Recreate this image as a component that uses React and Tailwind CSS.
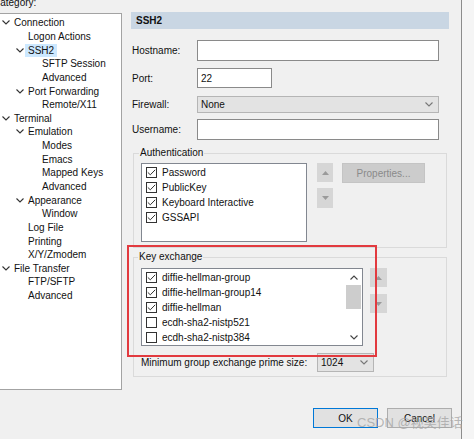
import React from 'react';

const tree = [
  { level: 0, chev: true, label: 'Connection' },
  { level: 1, label: 'Logon Actions' },
  { level: 1, chev: true, label: 'SSH2', selected: true },
  { level: 2, label: 'SFTP Session' },
  { level: 2, label: 'Advanced' },
  { level: 1, chev: true, label: 'Port Forwarding' },
  { level: 2, label: 'Remote/X11' },
  { level: 0, chev: true, label: 'Terminal' },
  { level: 1, chev: true, label: 'Emulation' },
  { level: 2, label: 'Modes' },
  { level: 2, label: 'Emacs' },
  { level: 2, label: 'Mapped Keys' },
  { level: 2, label: 'Advanced' },
  { level: 1, chev: true, label: 'Appearance' },
  { level: 2, label: 'Window' },
  { level: 1, label: 'Log File' },
  { level: 1, label: 'Printing' },
  { level: 1, label: 'X/Y/Zmodem' },
  { level: 0, chev: true, label: 'File Transfer' },
  { level: 1, label: 'FTP/SFTP' },
  { level: 1, label: 'Advanced' },
];

const authMethods = ['Password', 'PublicKey', 'Keyboard Interactive', 'GSSAPI'];

const kexMethods = [
  { label: 'diffie-hellman-group', on: true },
  { label: 'diffie-hellman-group14', on: true },
  { label: 'diffie-hellman', on: true },
  { label: 'ecdh-sha2-nistp521', on: false },
  { label: 'ecdh-sha2-nistp384', on: false },
];

function Chevron({ up = false, color = '#333' }) {
  return (
    <svg width="8" height="5" viewBox="0 0 8 5" className="shrink-0">
      <path
        d={up ? 'M0.5 4.5 L4 1 L7.5 4.5' : 'M0.5 0.5 L4 4 L7.5 0.5'}
        fill="none"
        stroke={color}
        strokeWidth="1.1"
      />
    </svg>
  );
}

function Triangle({ up = false }) {
  return (
    <svg width="7" height="4" viewBox="0 0 7 4">
      <path d={up ? 'M0 4 L3.5 0 L7 4 Z' : 'M0 0 L3.5 4 L7 0 Z'} fill="#9a9a9a" />
    </svg>
  );
}

function Checkbox({ checked }) {
  return (
    <span className="flex h-[11px] w-[11px] shrink-0 items-center justify-center border border-[#333] bg-white">
      {checked && (
        <svg width="9" height="7" viewBox="0 0 9 7">
          <path d="M0.8 3.4 L3.3 5.8 L8.2 0.8" fill="none" stroke="#333" strokeWidth="1" />
        </svg>
      )}
    </span>
  );
}

function CheckRow({ label, checked }) {
  return (
    <div className="flex h-[15px] items-center pl-[4px]">
      <Checkbox checked={checked} />
      <span className="ml-[5px]">{label}</span>
    </div>
  );
}

function SideButton({ up, h = 'h-[19px]', w = 'w-[16px]' }) {
  return (
    <div className={`flex ${h} ${w} items-center justify-center bg-[#d6d6d6]`}>
      <Triangle up={up} />
    </div>
  );
}

function FormRow({ label, children, className }) {
  return (
    <div className={`flex items-center ${className}`}>
      <span className="w-[66px] pl-[1px]">{label}</span>
      {children}
    </div>
  );
}

export default function App() {
  return (
    <div className="relative flex h-[439px] w-[474px] overflow-hidden bg-[#f0f0f0] font-['Liberation_Sans','Noto_Sans_CJK_SC',sans-serif] text-[10px] text-[#111]">
      {/* category tree */}
      <div className="flex w-[122px] shrink-0 flex-col">
        <div className="h-[13px] overflow-hidden">
          <span className="-ml-[7px] -mt-[2px] block leading-[10px]">Category:</span>
        </div>
        <div className="h-[377px] border-t border-r border-b border-[#a3a3a3] bg-white pt-[2px]">
          {tree.map((item, i) => (
            <div
              key={i}
              className={`flex h-[13.65px] items-center ${
                item.level === 0 ? 'pl-0' : item.level === 1 ? 'pl-[14px]' : 'pl-[28px]'
              }`}
            >
              <span className="flex w-[14px] justify-center pr-[3px]">
                {item.chev && <Chevron />}
              </span>
              <span
                className={`leading-[13px] ${
                  item.selected ? '-ml-[3px] bg-[#cce8ff] px-[3px]' : ''
                }`}
              >
                {item.label}
              </span>
            </div>
          ))}
        </div>
      </div>

      {/* settings pane */}
      <div className="flex w-[340px] shrink-0 flex-col border-r border-[#8c8c8c] pt-[12px] pl-[9px]">
        <div className="w-[318px]">
          <div className="flex h-[17px] items-center bg-[#c9d6e3] px-[5px] font-bold">SSH2</div>

          <FormRow label="Hostname:" className="mt-[11px] h-[21px]">
            <div className="h-full w-[242px] border border-[#8a8a8a] bg-white" />
          </FormRow>
          <FormRow label="Port:" className="mt-[7px] h-[20px]">
            <div className="flex h-full w-[75px] items-center border border-[#8a8a8a] bg-white px-[3px]">
              22
            </div>
          </FormRow>
          <FormRow label="Firewall:" className="mt-[8px] h-[17px]">
            <div className="flex h-full w-[242px] items-center justify-between border border-[#b5b5b5] bg-[#e3e3e3] pr-[5px] pl-[3px]">
              <span>None</span>
              <Chevron color="#777" />
            </div>
          </FormRow>
          <FormRow label="Username:" className="mt-[6px] h-[21px]">
            <div className="h-full w-[242px] border border-[#8a8a8a] bg-white" />
          </FormRow>

          <fieldset className="mt-[7px] ml-[2px] w-[314px] border border-[#dadada] pr-[6px] pb-[5px] pl-[7px]">
            <legend className="ml-[-2px] px-[1px] leading-[12px]">Authentication</legend>
            <div className="mt-[4px] flex items-start">
              <div className="h-[79px] w-[166px] border border-[#828790] bg-white pt-[1px]">
                {authMethods.map((m) => (
                  <CheckRow key={m} label={m} checked />
                ))}
              </div>
              <div className="ml-[10px] flex flex-col">
                <SideButton up />
                <div className="mt-[6px]">
                  <SideButton h="h-[20px]" />
                </div>
              </div>
              <div className="ml-[9px] flex h-[20px] w-[83px] items-center justify-center border border-[#c4c4c4] bg-[#cccccc] text-[#8a8a8a]">
                Properties...
              </div>
            </div>
          </fieldset>

          <fieldset className="mt-[3px] ml-[2px] w-[314px] border border-[#dadada] pr-[6px] pb-[4px] pl-[7px]">
            <legend className="ml-[-3px] px-[1px] leading-[12px]">Key exchange</legend>
            <div className="mt-[5px] flex items-start">
              <div className="flex h-[78px] w-[222px] border border-[#828790] bg-white">
                <div className="flex-1 pt-[1px]">
                  {kexMethods.map((m) => (
                    <CheckRow key={m.label} label={m.label} checked={m.on} />
                  ))}
                </div>
                <div className="flex w-[17px] flex-col items-center">
                  <div className="flex h-[16px] items-center">
                    <Chevron up color="#444" />
                  </div>
                  <div className="h-[24px] w-[15px] bg-[#cdcdcd]" />
                  <div className="flex-1" />
                  <div className="flex h-[16px] items-center">
                    <Chevron color="#444" />
                  </div>
                </div>
              </div>
              <div className="ml-[7px] flex flex-col">
                <SideButton up w="w-[17px]" />
                <div className="mt-[7px]">
                  <SideButton w="w-[17px]" />
                </div>
              </div>
            </div>
            <div className="mt-[7px] flex h-[19px] items-center">
              <span className="w-[176px]">Minimum group exchange prime size:</span>
              <div className="flex h-full w-[57px] items-center justify-between border border-[#b5b5b5] bg-[#e3e3e3] pr-[5px] pl-[3px]">
                <span>1024</span>
                <Chevron color="#777" />
              </div>
            </div>
          </fieldset>

          <div className="mt-[31px] flex w-[321px] justify-end gap-[9px]">
            <div className="flex h-[20px] w-[65px] items-center justify-center border-[1.5px] border-[#0078d7] bg-[#e1e1e1]">
              OK
            </div>
            <div className="flex h-[20px] w-[65px] items-center justify-center border border-[#adadad] bg-[#e1e1e1]">
              Cancel
            </div>
          </div>
        </div>
      </div>
      <div className="flex-1 bg-[#f5f5f5]" />

      {/* highlight drawn over the screenshot */}
      <div className="absolute top-[245px] left-[127px] h-[112px] w-[250px] border-2 border-[#e23a3f]" />

      {/* watermark */}
      <span className="absolute top-[415px] left-[357px] text-[13px] leading-[16px] text-[#a5a5a5]/80">
        CSDN @视昊佳话
      </span>
    </div>
  );
}
